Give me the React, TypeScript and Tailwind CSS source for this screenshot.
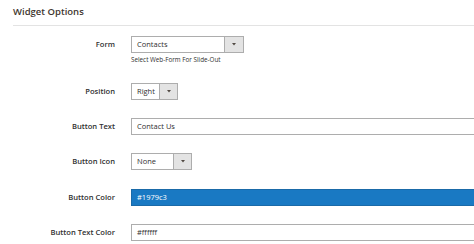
import React from "react";

const Arrow = () => (
  <svg width="4" height="3" viewBox="0 0 4 3" className="block">
    <path d="M0 0 L4 0 L2 2.5 Z" fill="#514943" />
  </svg>
);

const Label = ({ text }: { text: string }) => (
  <div className="w-[102px] shrink-0 text-right text-[7.6px] font-semibold text-[#303030]">
    {text}
  </div>
);

const Select = ({ value, width, arrowWidth }: { value: string; width: number; arrowWidth: number }) => (
  <div
    className="flex h-[17px] shrink-0 border border-[#adadad] bg-white"
    style={{ width }}
  >
    <div className="flex flex-1 items-center pl-[5px] text-[7.5px] text-[#303030]">{value}</div>
    <div
      className="flex items-center justify-center border-l border-[#adadad] bg-[#e3e3e3]"
      style={{ width: arrowWidth }}
    >
      <Arrow />
    </div>
  </div>
);

const TextInput = ({ value, blue }: { value: string; blue?: boolean }) => (
  <div
    className={
      blue
        ? "flex h-[17px] w-[400px] shrink-0 items-center border border-[#1a6aa8] bg-[#1979c3] pl-[5px] text-[7.5px] text-white"
        : "flex h-[17px] w-[400px] shrink-0 items-center border border-[#adadad] bg-white pl-[5px] text-[7.5px] text-[#303030]"
    }
  >
    {value}
  </div>
);

const Row = ({ label, children }: { label: string; children: React.ReactNode }) => (
  <div className="flex items-center gap-[16px]">
    <Label text={label} />
    {children}
  </div>
);

export default function App() {
  return (
    <div
      className="h-[244px] w-[474px] overflow-hidden bg-white pl-[13px]"
      style={{ fontFamily: '"Open Sans", "Noto Sans", sans-serif' }}
    >
      <div className="flex h-[26px] w-[600px] items-center border-b border-[#e3e3e3] pb-[1px] text-[9.5px] font-semibold text-[#41362f]">
        Widget Options
      </div>
      <div className="mt-[10px] flex flex-col">
        <Row label="Form">
          <Select value="Contacts" width={113} arrowWidth={19} />
        </Row>
        <div className="ml-[118px] mt-[2px] text-[6.3px] leading-[10px] text-[#303030]">
          Select Web-Form For Slide-Out
        </div>
        <div className="mt-[18px] flex flex-col gap-[18px]">
          <Row label="Position">
            <Select value="Right" width={47} arrowWidth={18} />
          </Row>
          <Row label="Button Text">
            <TextInput value="Contact Us" />
          </Row>
          <Row label="Button Icon">
            <Select value="None" width={61} arrowWidth={18} />
          </Row>
          <div className="mt-[1px]">
            <Row label="Button Color">
              <TextInput value="#1979c3" blue />
            </Row>
          </div>
          <Row label="Button Text Color">
            <TextInput value="#ffffff" />
          </Row>
        </div>
      </div>
    </div>
  );
}
